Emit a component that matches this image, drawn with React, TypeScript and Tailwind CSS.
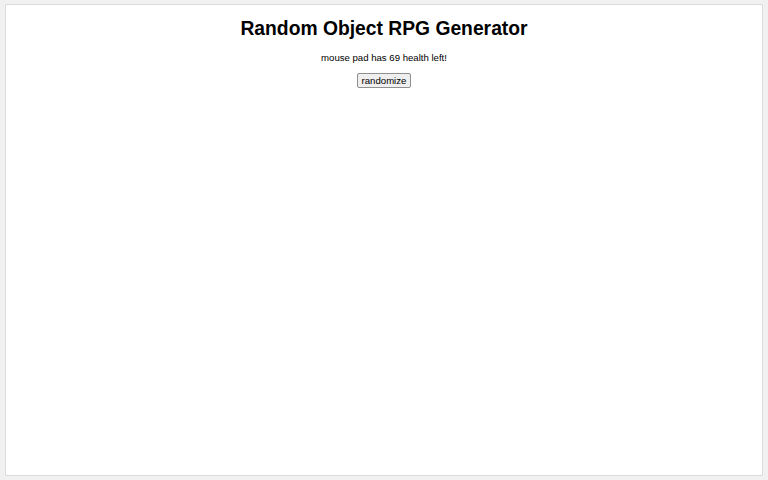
export default function App() {
  return (
    <div className="h-[480px] bg-[#f1f1f1] px-[5px] pt-[4px] pb-[4px] font-['Liberation_Sans',Arial,sans-serif] text-black">
      <div className="h-full w-full border border-[#dcdcdc] bg-white flex flex-col items-center">
        <h1 className="mt-[12px] text-[19.3px] leading-[24px] font-bold">Random Object RPG Generator</h1>
        <p className="mt-[10px] text-[9.6px] leading-[14px]">mouse pad has 69 health left!</p>
        <button className="mt-[8px] h-[15px] px-[4px] text-[9.6px] leading-[12px] bg-[#efefef] border border-[#8f8f8f] rounded-[2px]">
          randomize
        </button>
      </div>
    </div>
  );
}
